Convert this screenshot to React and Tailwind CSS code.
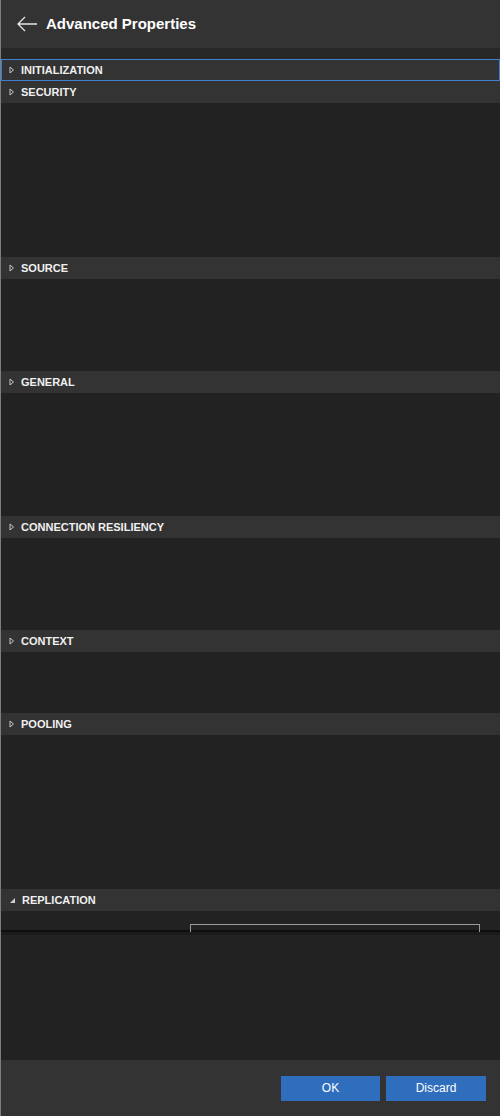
import React from 'react';

const sections = [
  { title: 'INITIALIZATION', body: 0, focused: true },
  { title: 'SECURITY', body: 154 },
  { title: 'SOURCE', body: 92 },
  { title: 'GENERAL', body: 123 },
  { title: 'CONNECTION RESILIENCY', body: 92 },
  { title: 'CONTEXT', body: 61 },
  { title: 'POOLING', body: 154 },
];

const Collapsed = () => (
  <svg width="6" height="8" viewBox="0 0 6 8" className="shrink-0">
    <path d="M1 1 L4.5 4 L1 7 Z" fill="none" stroke="#c8c8c8" strokeWidth="1" />
  </svg>
);

const Expanded = () => (
  <svg width="7" height="7" viewBox="0 0 7 7" className="shrink-0">
    <path d="M6 1 L6 6 L1 6 Z" fill="#d0d0d0" />
  </svg>
);

const SectionHeader = ({ title, open, focused }) => (
  <div
    className={`flex h-[22px] items-center gap-[6px] bg-[#333333] pl-[8px] ${
      focused ? 'shadow-[inset_0_0_0_1px_#3f7fd2]' : ''
    }`}
  >
    {open ? <Expanded /> : <Collapsed />}
    <span className="text-[11px] font-bold leading-none text-[#f0f0f0]">{title}</span>
  </div>
);

export default function App() {
  return (
    <div
      className="flex h-[1116px] w-[500px] flex-col border-l border-[#7d7d7d] bg-[#222222]"
      style={{ fontFamily: '"Liberation Sans", Arial, sans-serif' }}
    >
      <div className="flex h-[48px] shrink-0 items-center gap-[8px] bg-[#333333] pl-[15px]">
        <svg width="22" height="16" viewBox="0 0 22 16">
          <path d="M21 8 H2 M9 1 L2 8 L9 15" fill="none" stroke="#e6e6e6" strokeWidth="1.3" />
        </svg>
        <span className="text-[15px] font-bold text-white">Advanced Properties</span>
      </div>
      <div className="h-[11px] shrink-0 bg-[#282828]" />
      <div className="flex shrink-0 flex-col">
        {sections.map((s) => (
          <div key={s.title}>
            <SectionHeader title={s.title} focused={s.focused} />
            {s.body > 0 && <div className="bg-[#222222]" style={{ height: s.body }} />}
          </div>
        ))}
        <SectionHeader title="REPLICATION" open />
        <div className="relative h-[19px] bg-[#222222]">
          <div className="absolute left-[189px] top-[13px] h-[8px] w-[290px] border-l border-r border-t border-[#9a9a9a]" />
        </div>
      </div>
      <div className="h-[2px] shrink-0 bg-[#0e0e0e]" />
      <div className="h-[3px] shrink-0 bg-[#1b1b1b]" />
      <div className="flex-1 bg-[#222222]" />
      <div className="flex h-[56px] shrink-0 items-center justify-end gap-[6px] bg-[#333333] pr-[14px]">
        <button className="h-[25px] w-[99px] bg-[#2f6dbd] text-[12px] text-white">OK</button>
        <button className="h-[25px] w-[100px] bg-[#2f6dbd] text-[12px] text-white">Discard</button>
      </div>
    </div>
  );
}
